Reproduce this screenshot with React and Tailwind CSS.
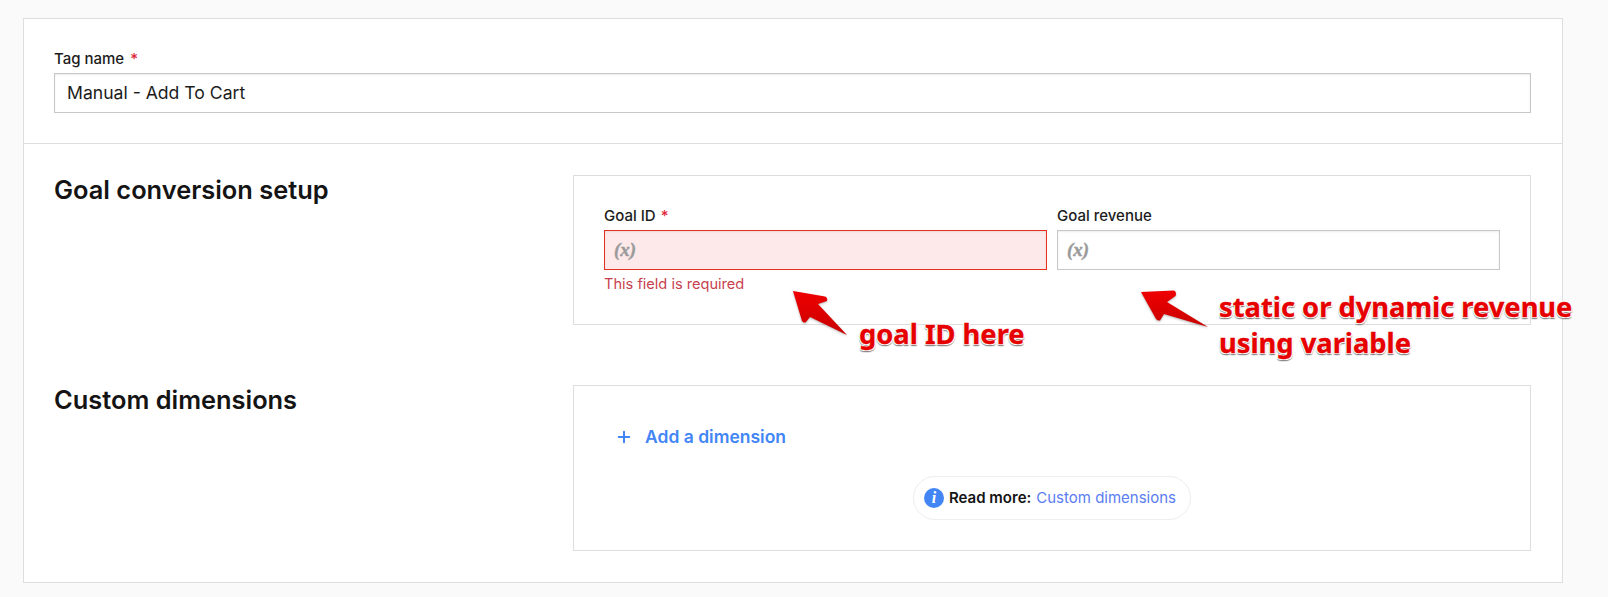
import { Plus } from 'lucide-react';

const labelClass = 'text-[15px] leading-[20px] font-medium text-[#1c1c1c]';

function VarInput({ error }) {
  return (
    <div
      className={`flex h-[40px] items-center border px-[9px] shadow-[inset_0_1px_2px_rgba(0,0,0,0.08)] ${
        error ? 'border-[#e4321f] bg-[#fde9e9]' : 'border-[#c8c8c8] bg-white'
      }`}
    >
      <span className="font-['Liberation_Serif',serif] text-[19px] font-bold italic text-[#9a9a9a] [-webkit-text-stroke:0.4px_#9a9a9a]">(x)</span>
    </div>
  );
}

function Section({ title, children, className }) {
  return (
    <div className={`flex ${className}`}>
      <h2 className="w-[519px] shrink-0 text-[25.4px] leading-[30px] font-semibold text-[#141414]">{title}</h2>
      <div className="min-w-0 flex-1 border border-[#dddddd] bg-white">{children}</div>
    </div>
  );
}

const noteClass =
  "absolute font-['Noto_Sans',sans-serif] text-[27.3px] leading-[36px] font-bold whitespace-nowrap text-[#e60000] [-webkit-text-stroke:0.3px_#e60000] [text-shadow:1px_0_0_#fff,-1px_0_0_#fff,0_-1px_0_#fff,1px_1px_0_#fff,-1px_1px_0_#fff,0_2px_1px_#8a8a8a,1px_2px_1px_#a0a0a0,-1px_2px_1px_#a0a0a0]";

export default function App() {
  return (
    <div className="relative h-[597px] overflow-hidden bg-[#fafafa] pt-[18px] pr-[45px] pl-[23px] font-['Inter',sans-serif]">
      <div className="border border-[#dedede] bg-white">
        {/* tag name */}
        <div className="h-[125px] border-b border-[#dedede] pt-[30px] pr-[31px] pl-[30px]">
          <div className={labelClass}>
            Tag name <span className="ml-[2px] text-[#e0283c]">*</span>
          </div>
          <div className="mt-[4px] flex h-[40px] items-center border border-[#c8c8c8] px-[12px] pt-[1px] text-[17.6px] text-[#1c1c1c] shadow-[inset_0_1px_2px_rgba(0,0,0,0.08)]">
            Manual - Add To Cart
          </div>
        </div>

        <div className="pt-[31px] pr-[31px] pb-[31px] pl-[30px]">
          <Section title="Goal conversion setup" className="h-[150px]">
            <div className="flex gap-[10px] px-[30px] pt-[30px]">
              <div className="w-[443px]">
                <div className={labelClass}>
                  Goal ID <span className="ml-[1px] text-[#e0283c]">*</span>
                </div>
                <div className="mt-[4px]">
                  <VarInput error />
                </div>
                <div className="mt-[4px] text-[14.6px] leading-[20px] text-[#c8414e]">This field is required</div>
              </div>
              <div className="w-[443px]">
                <div className={labelClass}>Goal revenue</div>
                <div className="mt-[4px]">
                  <VarInput />
                </div>
              </div>
            </div>
          </Section>

          <Section title="Custom dimensions" className="mt-[60px] h-[166px]">
            <div className="flex items-center pt-[39px] pl-[41px] text-[#4285f4]">
              <Plus size={18} strokeWidth={2.75} />
              <span className="ml-[12px] text-[17.5px] leading-[24px] font-semibold">Add a dimension</span>
            </div>
            <div className="mt-[27px] flex justify-center">
              <div className="flex h-[44px] w-[278px] items-center rounded-full border border-[#eeeeee] pl-[10px] text-[15px]">
                <span className="flex h-[20px] w-[20px] items-center justify-center rounded-full bg-[#4285f4] font-['Liberation_Serif',serif] text-[16px] font-bold text-white italic">
                  i
                </span>
                <span className="ml-[5px] pt-[1px] font-semibold text-[#141414]">Read more:</span>
                <span className="ml-[5px] pt-[1px] text-[#5a7cf0]">Custom dimensions</span>
              </div>
            </div>
          </Section>
        </div>
      </div>

      {/* red annotations on top of the form */}
      <svg
        className="pointer-events-none absolute top-0 left-0 [filter:drop-shadow(0_1px_1px_rgba(0,0,0,0.3))]"
        width="1608"
        height="597"
        viewBox="0 0 1608 597"
      >
        <defs>
          <linearGradient id="arrowRed" x1="0" y1="0" x2="0" y2="1">
            <stop offset="0" stopColor="#f00000" />
            <stop offset="1" stopColor="#c80000" />
          </linearGradient>
        </defs>
        <path
          d="M793 291 L825 296.5 Q828 298 827 301 L818 304 L847 335 L810 317 L806 322 Q804 323.5 802 321 Z"
          fill="url(#arrowRed)"
        />
        <path
          d="M1141 292 L1174 290.5 Q1177 292 1175.5 296 L1167 302 L1208 327 L1164 314 L1160 320.5 Q1158 321 1156 319 Z"
          fill="url(#arrowRed)"
        />
      </svg>
      <div className={`${noteClass} top-[316px] left-[859px]`}>goal ID here</div>
      <div className={`${noteClass} top-[289px] left-[1219px]`}>
        static or dynamic revenue
        <br />
        using variable
      </div>
    </div>
  );
}
